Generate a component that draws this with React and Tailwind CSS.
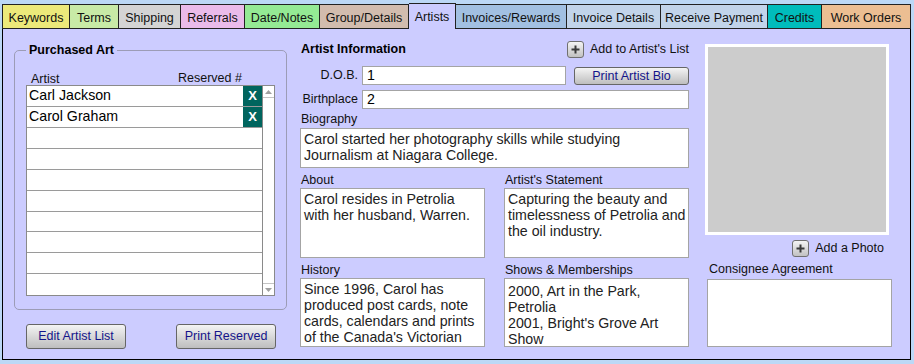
import React from "react";

const tabs = [
  { label: "Keywords", w: "w-[68px] border-l", bg: "bg-[#ece97a]" },
  { label: "Terms", w: "w-[49px]", bg: "bg-[#c8eaa6]" },
  { label: "Shipping", w: "w-[62px]", bg: "bg-[#d4d4d4]" },
  { label: "Referrals", w: "w-[64px]", bg: "bg-[#eabbea]" },
  { label: "Date/Notes", w: "w-[75px]", bg: "bg-[#94ea94]" },
  { label: "Group/Details", w: "w-[89px]", bg: "bg-[#d2bcae]" },
  { label: "Artists", w: "w-[47px]", bg: "bg-[#ccccff]", active: true },
  { label: "Invoices/Rewards", w: "w-[111px]", bg: "bg-[#a2c0e2]" },
  { label: "Invoice Details", w: "w-[94px]", bg: "bg-[#c2d4ea]" },
  { label: "Receive Payment", w: "w-[107px]", bg: "bg-[#c2d4ea]" },
  { label: "Credits", w: "w-[54px]", bg: "bg-[#00bcbc]" },
  { label: "Work Orders", w: "w-[89px]", bg: "bg-[#ecbe92]" },
];

const artists = ["Carl Jackson", "Carol Graham", "", "", "", "", "", "", "", ""];

function PlusBtn() {
  return (
    <span className="flex h-[17px] w-[17px] items-center justify-center rounded-[3px] border border-[#707070] bg-linear-to-b from-[#f4f4f4] to-[#c2c2c2]">
      <svg width="9" height="9" viewBox="0 0 9 9">
        <path d="M4.5 0.5v8M0.5 4.5h8" stroke="#3a3a3a" strokeWidth="2" />
      </svg>
    </span>
  );
}

function Box({ className, children }) {
  return (
    <div
      className={
        "overflow-hidden whitespace-nowrap border border-[#a4a4a4] bg-white px-[3px] pt-[2px] text-[14.2px] leading-[16px] text-[#222] " +
        className
      }
    >
      {children}
    </div>
  );
}

export default function App() {
  return (
    <div
      className="h-[364px] w-[914px] overflow-hidden bg-[#bcd8f6] text-[12.5px] text-[#111]"
      style={{ fontFamily: '"Liberation Sans", Arial, sans-serif' }}
    >
      {/* tab strip */}
      <div className="flex h-[29px] items-end pl-[2px]">
        {tabs.map((t) =>
          t.active ? (
            <div
              key={t.label}
              className={`${t.w} ${t.bg} flex h-[26px] items-end justify-center border-t border-r border-[#222] pb-[5px] leading-[14px]`}
            >
              {t.label}
            </div>
          ) : (
            <div
              key={t.label}
              className={`${t.w} ${t.bg} flex h-[25px] items-end justify-center border-t border-r border-b border-[#222] pb-[3px] leading-[14px]`}
            >
              {t.label}
            </div>
          )
        )}
      </div>

      {/* panel */}
      <div className="ml-[2px] flex h-[331px] w-[909px] border-r border-b border-l border-black bg-[#ccccff]">
        {/* left column */}
        <div className="ml-[11px] mt-[14px] flex w-[273px] flex-col">
          <fieldset className="h-[267px] w-[273px] rounded-[5px] border border-[#9c9cb6] px-[11px]">
            <legend className="px-[3px] text-[12.5px] font-bold leading-[14px] text-black">
              Purchased Art
            </legend>
            <div className="mt-[14px] flex h-[14px] leading-[14px]">
              <span className="w-[152px] pl-[5px] pt-[1px]">Artist</span>
              <span>Reserved #</span>
            </div>
            <div className="flex h-[211px] w-[249px] border border-[#8a8a8a] bg-white">
              <div className="flex flex-1 flex-col">
                {artists.map((a, i) => (
                  <div
                    key={i}
                    className="flex h-[21px] items-center border-b border-[#9a9a9a] text-[14.2px] text-black last:border-b-0"
                  >
                    <span className="flex-1 pl-[2px]">{a}</span>
                    {a && (
                      <span className="flex h-full w-[19px] items-center justify-center bg-[#00655e] text-[13px] font-bold text-white">
                        X
                      </span>
                    )}
                  </div>
                ))}
              </div>
              <div className="flex w-[12px] flex-col border-l border-[#8a8a8a]">
                <div className="flex h-[12px] items-center justify-center border-b border-[#c4c4c4]">
                  <svg width="7" height="4" viewBox="0 0 7 4">
                    <path d="M0 4L3.5 0L7 4Z" fill="#a0a0a0" />
                  </svg>
                </div>
                <div className="flex-1" />
                <div className="flex h-[12px] items-center justify-center border-t border-[#c4c4c4]">
                  <svg width="7" height="4" viewBox="0 0 7 4">
                    <path d="M0 0L3.5 4L7 0Z" fill="#a0a0a0" />
                  </svg>
                </div>
              </div>
            </div>
          </fieldset>
          <div className="mt-[14px] flex gap-[50px] pl-[12px]">
            <button className="flex h-[25px] w-[100px] items-center justify-center rounded-[3px] border border-[#666] bg-linear-to-b from-[#f4f4f4] to-[#bebebe] text-[12.5px] text-[#14148a]">
              Edit Artist List
            </button>
            <button className="flex h-[25px] w-[100px] items-center justify-center rounded-[3px] border border-[#666] bg-linear-to-b from-[#f4f4f4] to-[#bebebe] text-[12.5px] text-[#14148a]">
              Print Reserved
            </button>
          </div>
        </div>

        {/* middle column */}
        <div className="ml-[13px] mt-[11px] flex w-[389px] flex-col">
          <div className="flex h-[18px] items-center">
            <span className="w-[274px] pl-[1px] font-bold text-black">Artist Information</span>
            <PlusBtn />
            <span className="ml-[6px] whitespace-nowrap">Add to Artist's List</span>
          </div>
          <div className="mt-[8px] flex items-start">
            <span className="h-[19px] w-[62px] pr-[4px] text-right leading-[19px]">D.O.B.</span>
            <div className="h-[19px] w-[204px] border border-[#a4a4a4] bg-white pl-[4px] text-[14.2px] leading-[17px] text-black">
              1
            </div>
            <button className="ml-[8px] mt-[1px] flex h-[18px] w-[115px] items-center justify-center rounded-[3px] border border-[#666] bg-linear-to-b from-[#f4f4f4] to-[#bebebe] text-[12.5px] text-[#14148a]">
              Print Artist Bio
            </button>
          </div>
          <div className="mt-[5px] flex items-start">
            <span className="h-[19px] w-[62px] pr-[4px] text-right leading-[19px]">Birthplace</span>
            <div className="h-[19px] w-[327px] border border-[#a4a4a4] bg-white pl-[4px] text-[14.2px] leading-[17px] text-black">
              2
            </div>
          </div>
          <div className="mt-[3px] h-[14px] pl-[1px] leading-[14px]">Biography</div>
          <Box className="mt-[2px] h-[40px] w-[389px]">
            Carol started her photography skills while studying
            <br />
            Journalism at Niagara College.
          </Box>
          <div className="mt-[5px] flex h-[14px] leading-[14px]">
            <span className="w-[204px] pl-[1px]">About</span>
            <span className="pl-[1px]">Artist's Statement</span>
          </div>
          <div className="mt-[1px] flex gap-[19px]">
            <Box className="h-[70px] w-[185px]">
              Carol resides in Petrolia
              <br />
              with her husband, Warren.
            </Box>
            <Box className="h-[70px] w-[185px]">
              Capturing the beauty and
              <br />
              timelessness of Petrolia and
              <br />
              the oil industry.
            </Box>
          </div>
          <div className="mt-[5px] flex h-[14px] leading-[14px]">
            <span className="w-[204px] pl-[1px]">History</span>
            <span className="pl-[1px]">Shows &amp; Memberships</span>
          </div>
          <div className="mt-[1px] flex gap-[19px]">
            <Box className="h-[69px] w-[185px]">
              Since 1996, Carol has
              <br />
              produced post cards, note
              <br />
              cards, calendars and prints
              <br />
              of the Canada's Victorian
            </Box>
            <Box className="h-[69px] w-[185px] pt-[4px]">
              2000, Art in the Park,
              <br />
              Petrolia
              <br />
              2001, Bright's Grove Art
              <br />
              Show
            </Box>
          </div>
        </div>

        {/* right column */}
        <div className="ml-[16px] mt-[15px] flex w-[186px] flex-col">
          <div className="h-[191px] w-[184px] border-[3px] border-white bg-[#cccccc]" />
          <div className="mt-[4px] flex h-[18px] items-center justify-end pr-[7px]">
            <PlusBtn />
            <span className="ml-[6px] whitespace-nowrap">Add a Photo</span>
          </div>
          <div className="mt-[5px] h-[14px] pl-[4px] leading-[14px]">Consignee Agreement</div>
          <Box className="ml-[2px] mt-[3px] h-[68px] w-[185px]" />
        </div>
      </div>
    </div>
  );
}
